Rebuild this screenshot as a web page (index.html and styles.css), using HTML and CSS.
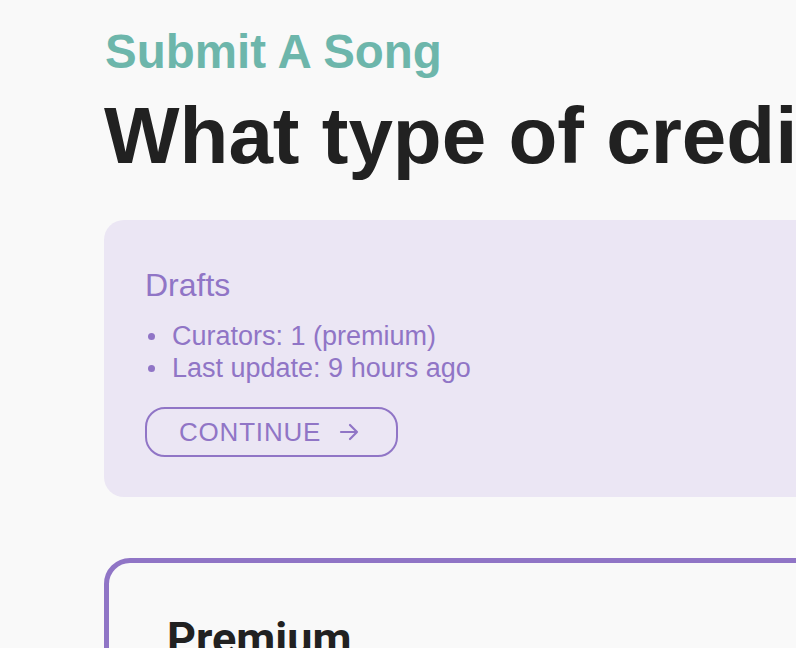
FILE: index.html
```html
<!DOCTYPE html>
<html lang="en">
<head>
<meta charset="utf-8">
<title>Submit A Song</title>
<link rel="stylesheet" href="styles.css">
</head>
<body>
<main class="page">
  <h2 class="eyebrow">Submit A Song</h2>
  <h1 class="title">What type of credits do you want to use?</h1>
  <section class="drafts">
    <h3 class="drafts-title">Drafts</h3>
    <ul class="drafts-list">
      <li>Curators: 1 (premium)</li>
      <li>Last update: 9 hours ago</li>
    </ul>
    <button class="continue" type="button">
      <span>CONTINUE</span>
      <svg class="arrow" width="20" height="20" viewBox="0 0 20 20" aria-hidden="true">
        <path d="M2 10H18M11 3L18 10L11 17" fill="none" stroke="currentColor" stroke-width="2.2" stroke-linecap="round" stroke-linejoin="round"/>
      </svg>
    </button>
  </section>
  <section class="plan">
    <h3 class="plan-title">Premium</h3>
  </section>
</main>
</body>
</html>
```

FILE: styles.css
```css
html, body {
  margin: 0;
  padding: 0;
}
body {
  background: #f9f9f9;
  overflow: hidden;
  font-family: "Liberation Sans", Arial, sans-serif;
}
.page {
  width: 1400px;
  padding: 26px 0 0 104px;
  box-sizing: border-box;
}
.eyebrow {
  margin: 0;
  padding-left: 1px;
  font-size: 47.5px;
  line-height: 52px;
  font-weight: 700;
  color: #6db6ab;
}
.title {
  margin: 10px 0 0;
  font-size: 80px;
  line-height: 96px;
  font-weight: 700;
  color: #212121;
  white-space: nowrap;
}
.drafts {
  margin-top: 36px;
  background: #ebe6f4;
  border-radius: 20px;
  padding: 46px 41px 40px;
  color: #9075c6;
}
.drafts-title {
  margin: 0;
  font-size: 32px;
  line-height: 38px;
  font-weight: 400;
}
.drafts-list {
  list-style: none;
  margin: 16px 0 0;
  padding: 0;
  font-size: 27px;
  line-height: 32px;
}
.drafts-list li {
  display: flex;
  align-items: center;
  gap: 17px;
}
.drafts-list li::before {
  content: "";
  width: 7px;
  height: 7px;
  border-radius: 50%;
  background: #9075c6;
  margin-left: 3px;
}
.continue {
  margin-top: 23px;
  display: flex;
  align-items: center;
  gap: 18px;
  height: 50px;
  box-sizing: border-box;
  padding: 0 37px 0 32px;
  border: 2px solid #9075c6;
  border-radius: 20px;
  background: transparent;
  color: #9075c6;
  font-family: "Liberation Sans", Arial, sans-serif;
  font-size: 26px;
  letter-spacing: 0.8px;
}
.arrow {
  display: block;
}
.plan {
  margin-top: 61px;
  border: 5px solid #9075c6;
  border-radius: 26px;
  padding: 50px 58px;
  height: 400px;
}
.plan-title {
  margin: 0;
  font-family: Roboto, "Liberation Sans", sans-serif;
  font-size: 45px;
  line-height: 52px;
  font-weight: 700;
  color: #212121;
}
```
